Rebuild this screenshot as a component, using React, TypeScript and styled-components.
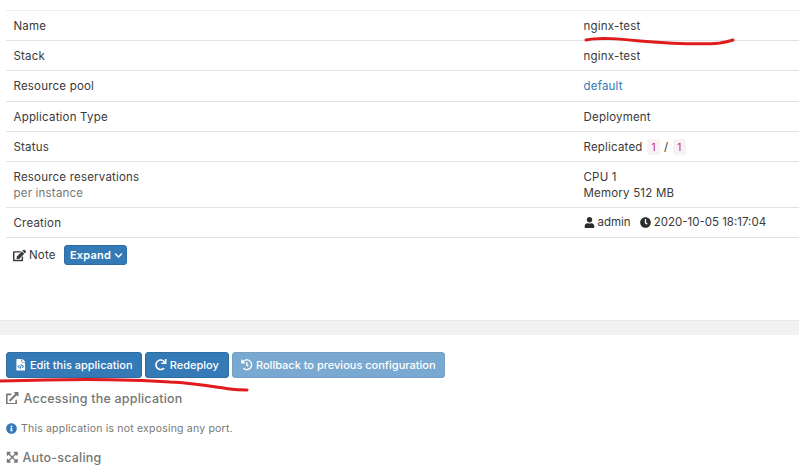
import styled, { createGlobalStyle } from "styled-components";
import {
  FaChevronDown,
  FaClock,
  FaEdit,
  FaExpandArrowsAlt,
  FaExternalLinkAlt,
  FaFileCode,
  FaHistory,
  FaInfoCircle,
  FaRedo,
  FaUser,
} from "react-icons/fa";

const GlobalStyle = createGlobalStyle`
  html, body {
    margin: 0;
    padding: 0;
    background: #fff;
  }
  body {
    font-family: "Inter", "Noto Sans", sans-serif;
    font-size: 11.5px;
    letter-spacing: 0.2px;
    color: #3a3a3a;
  }
`;

const Page = styled.div`
  position: relative;
  width: 812px;
  height: 470px;
  overflow: hidden;
`;

const Content = styled.div`
  width: 799px;
  padding-top: 10px;
`;

const Table = styled.div`
  margin-left: 6px;
  border-top: 1px solid #ececec;
`;

const Row = styled.div<{ $height?: number }>`
  display: grid;
  grid-template-columns: 570px 1fr;
  align-items: center;
  box-sizing: border-box;
  height: ${(p) => p.$height ?? 30.2}px;
  padding: 1px 0 0 7.5px;
  border-bottom: 1px solid #e2e2e2;
  line-height: 16px;
`;

const Muted = styled.div`
  color: #777;
`;

const PoolLink = styled.a`
  color: #337ab7;
  text-decoration: none;
`;

const Code = styled.code`
  display: inline-block;
  width: 13px;
  font-family: "Inter", sans-serif;
  font-size: 10px;
  line-height: 16px;
  text-align: center;
  margin: 0 4px 0 1px;
  color: #c7254e;
  background: #f9f2f4;
  border-radius: 3px;
`;

const Meta = styled.span`
  display: inline-flex;
  align-items: center;
  gap: 3px;
  margin-right: 9px;
  letter-spacing: 0;

  svg {
    font-size: 11px;
    color: #2c2c2c;
  }
`;

const NoteRow = styled.div`
  display: flex;
  align-items: center;
  gap: 7px;
  height: 20px;
  margin: 7px 0 0 13px;
`;

const NoteLabel = styled.span`
  display: inline-flex;
  align-items: center;
  gap: 3px;
  width: 44px;

  svg {
    font-size: 13px;
  }
`;

const ExpandButton = styled.button`
  display: inline-flex;
  align-items: center;
  gap: 3px;
  width: 63px;
  height: 20px;
  padding: 0 0 0 5px;
  font: 600 11px "Inter", sans-serif;
  letter-spacing: 0.2px;
  color: #fff;
  background: #337ab7;
  border: 1px solid #2e6da4;
  border-radius: 3px;

  svg {
    font-size: 9px;
  }
`;

const Band = styled.div`
  height: 14px;
  margin-top: 55px;
  background: #f2f2f2;
  border-top: 1px solid #e8e8e8;
`;

const Actions = styled.div`
  display: flex;
  gap: 3px;
  margin: 17px 0 0 6px;
`;

const ActionButton = styled.button<{ $width: number }>`
  display: inline-flex;
  align-items: center;
  justify-content: center;
  gap: 3px;
  width: ${(p) => p.$width}px;
  height: 26px;
  padding: 0;
  font: 500 11px "Inter", sans-serif;
  color: #fff;
  background: #337ab7;
  border: 1px solid #2e6da4;
  border-radius: 3px;

  &:disabled {
    opacity: 0.65;
  }

  svg {
    font-size: 11.5px;
  }
`;

const SectionTitle = styled.div<{ $top: number; $gap: number }>`
  display: flex;
  align-items: center;
  gap: ${(p) => p.$gap}px;
  height: 16px;
  margin: ${(p) => p.$top}px 0 0 6px;
  font-size: 12.5px;
  font-weight: 500;
  color: #767676;

  svg {
    font-size: 12.5px;
  }
`;

const Hint = styled.div`
  display: flex;
  align-items: center;
  gap: 4px;
  height: 14px;
  margin: 15px 0 0 6px;
  font-size: 10.5px;
  letter-spacing: 0.2px;
  color: #777;

  svg {
    font-size: 11px;
    color: #337ab7;
  }
`;

const Scribbles = styled.svg`
  position: absolute;
  inset: 0;
  pointer-events: none;
`;

export default function App() {
  return (
    <Page>
      <GlobalStyle />
      <Content>
        <Table>
          <Row>
            <div>Name</div>
            <div>nginx-test</div>
          </Row>
          <Row>
            <div>Stack</div>
            <div>nginx-test</div>
          </Row>
          <Row>
            <div>Resource pool</div>
            <PoolLink href="#">default</PoolLink>
          </Row>
          <Row>
            <div>Application Type</div>
            <div>Deployment</div>
          </Row>
          <Row>
            <div>Status</div>
            <div>
              Replicated <Code>1</Code>/ <Code>1</Code>
            </div>
          </Row>
          <Row $height={46}>
            <div>
              Resource reservations
              <Muted>per instance</Muted>
            </div>
            <div>
              CPU 1
              <div>Memory 512 MB</div>
            </div>
          </Row>
          <Row>
            <div>Creation</div>
            <div>
              <Meta>
                <FaUser /> admin
              </Meta>
              <Meta>
                <FaClock /> 2020-10-05 18:17:04
              </Meta>
            </div>
          </Row>
        </Table>
        <NoteRow>
          <NoteLabel>
            <FaEdit /> Note
          </NoteLabel>
          <ExpandButton>
            Expand <FaChevronDown />
          </ExpandButton>
        </NoteRow>
        <Band />
        <Actions>
          <ActionButton $width={136}>
            <FaFileCode /> Edit this application
          </ActionButton>
          <ActionButton $width={84}>
            <FaRedo /> Redeploy
          </ActionButton>
          <ActionButton $width={213} disabled>
            <FaHistory /> Rollback to previous configuration
          </ActionButton>
        </Actions>
        <SectionTitle $top={12} $gap={5}>
          <FaExternalLinkAlt /> Accessing the application
        </SectionTitle>
        <Hint>
          <FaInfoCircle /> This application is not exposing any port.
        </Hint>
        <SectionTitle $top={14} $gap={4}>
          <FaExpandArrowsAlt /> Auto-scaling
        </SectionTitle>
      </Content>
      <Scribbles width="812" height="470" viewBox="0 0 812 470" fill="none">
        <path
          d="M586 40 C600 37 620 39 640 41 C665 43 700 45 720 43 C727 42 730 41 733 40"
          stroke="#e01b1b"
          strokeWidth="3"
          strokeLinecap="round"
        />
        <path
          d="M0 381 C60 379 130 379 170 382 C195 383 215 387 230 389 C237 390 242 390 247 390"
          stroke="#e01b1b"
          strokeWidth="3"
          strokeLinecap="round"
        />
      </Scribbles>
    </Page>
  );
}
